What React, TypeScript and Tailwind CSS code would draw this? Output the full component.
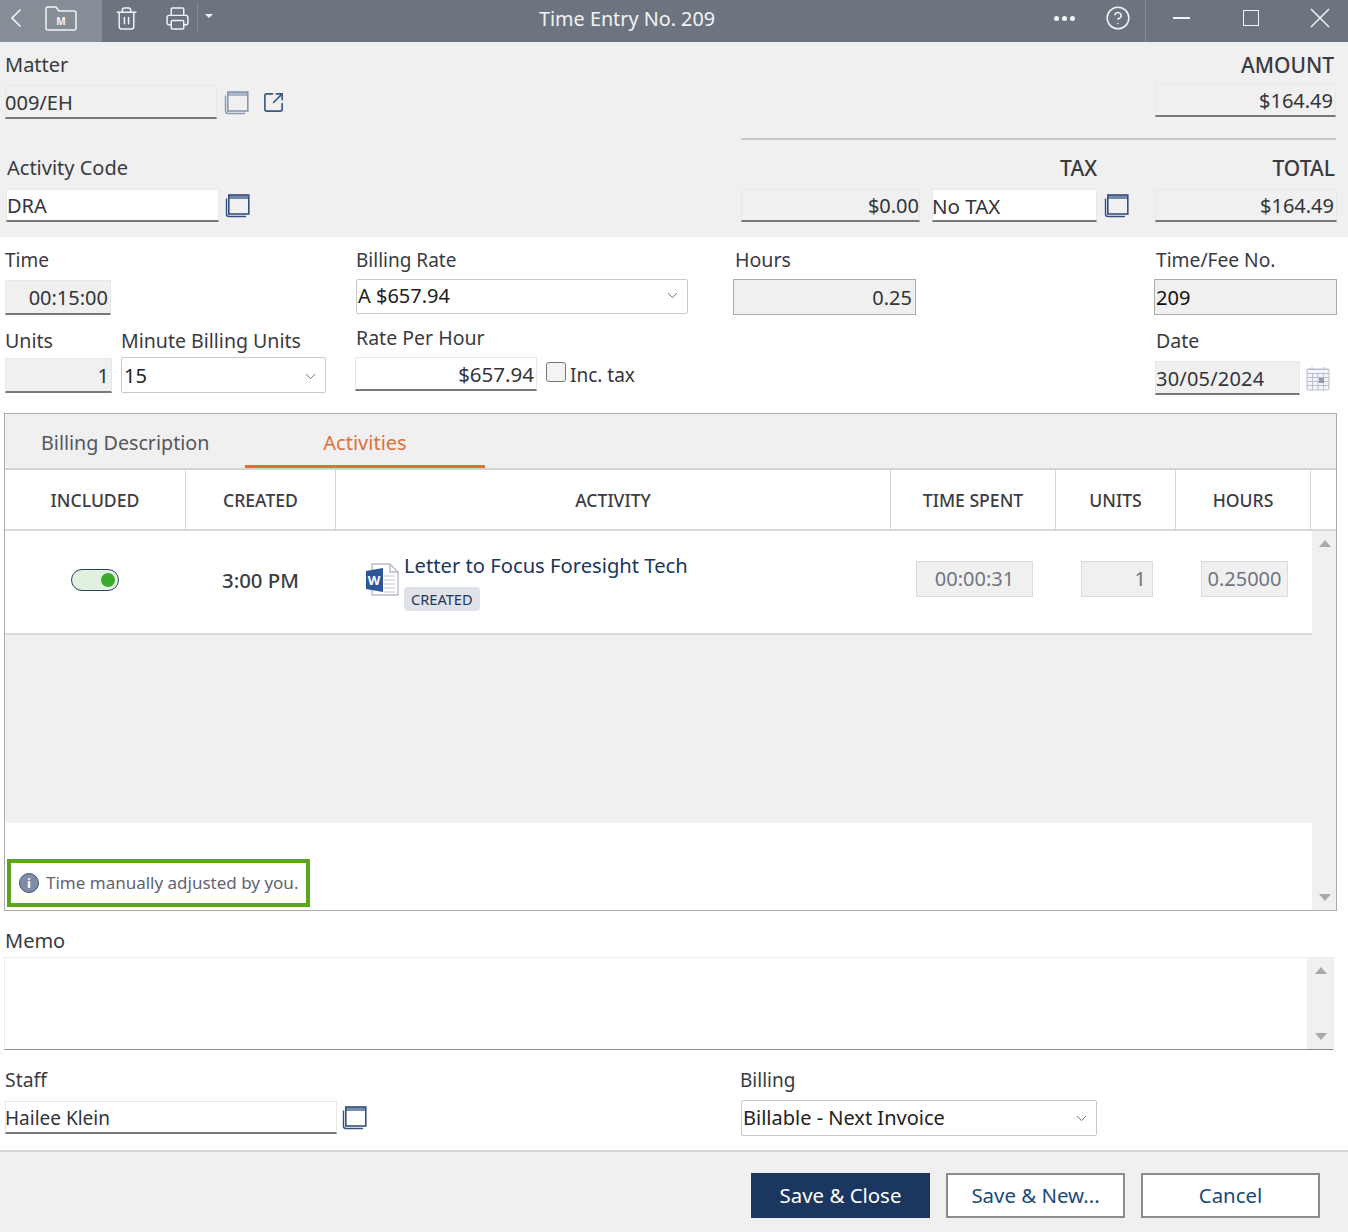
import { ChevronDown, HelpCircle, Trash2, Printer, SquareArrowOutUpRight } from "lucide-react";
import type { ReactNode } from "react";
import { twMerge } from "tailwind-merge";

const font = { fontFamily: '"Noto Sans", sans-serif' };

function StackIcon({ faded = false }: { faded?: boolean }) {
  return (
    <svg width="25" height="25" viewBox="0 0 25 25" fill="none" className={faded ? "shrink-0 opacity-55" : "shrink-0"}>
      <path d="M1.5 5.5V21Q1.5 23.5 4 23.5H21" stroke="#35507f" strokeWidth="1.4" />
      <rect x="3.8" y="2" width="20" height="19" stroke="#35507f" strokeWidth="1.6" />
      <rect x="3.8" y="2" width="20" height="4" fill="#35507f" fillOpacity="0.65" />
    </svg>
  );
}

function BackChevron() {
  return (
    <svg width="12" height="20" viewBox="0 0 12 20" fill="none" stroke="#f2f3f4" strokeWidth="1.6">
      <path d="M10.5 1.5L2 10L10.5 18.5" />
    </svg>
  );
}

function FolderIcon() {
  return (
    <svg width="32" height="26" viewBox="0 0 32 26" fill="none" stroke="#f2f3f4" strokeWidth="1.5">
      <path d="M1 4V23Q1 25 3 25H29Q31 25 31 23V8Q31 6 29 6H14L11 2H3Q1 2 1 4Z" />
      <text x="16" y="20" fontSize="10" fontWeight="700" fill="#f2f3f4" stroke="none" textAnchor="middle" style={font}>M</text>
    </svg>
  );
}

function WindowControls() {
  return (
    <div className="flex h-full flex-1 items-center border-l border-[#858e97] pb-[6px]">
      <div className="ml-[27px] h-[1.5px] w-[17px] bg-[#f2f3f4]" />
      <div className="ml-[53px] h-[16px] w-[16px] border-[1.5px] border-[#f2f3f4]" />
      <svg width="20" height="20" viewBox="0 0 20 20" fill="none" stroke="#f2f3f4" strokeWidth="1.5" className="ml-[51px]">
        <path d="M1 1L19 19M19 1L1 19" />
      </svg>
    </div>
  );
}

function WordIcon() {
  return (
    <svg width="35" height="36" viewBox="0 0 35 36" fill="none">
      <path d="M7 2H25L33 10V33H7Z" fill="#fff" stroke="#b6bcc8" strokeWidth="1.4" />
      <path d="M25 2V10H33" stroke="#b6bcc8" strokeWidth="1.4" />
      <path d="M19 14H30M19 18H30M19 22H30M19 26H30M19 30H30" stroke="#c6cad2" strokeWidth="1.2" />
      <path d="M1 9L18 6V30L1 27Z" fill="#2b579a" />
      <text x="9" y="23" fontSize="13" fontWeight="700" fill="#fff" textAnchor="middle" style={font}>W</text>
    </svg>
  );
}

function CalendarIcon() {
  return (
    <svg width="24" height="25" viewBox="0 0 24 25" fill="none" stroke="#b6bdcc" strokeWidth="1">
      <rect x="1" y="3" width="22" height="21" rx="1" fill="#f4f5f8" />
      <path d="M1 3.5H23M6 1V4M18 1V4M1 7.5H23M1 11.5H23M1 15.5H23M1 19.5H23M6.5 7V24M12 7V24M17.5 7V24" />
      <rect x="13" y="12" width="5" height="5" fill="#9099ae" stroke="none" />
    </svg>
  );
}

function Label({ children, className = "" }: { children: ReactNode; className?: string }) {
  // leading goes last: twMerge drops a leading class that comes before a text size
  return <div className={twMerge("text-[20px] text-[#3a3a42]", className, "leading-[26px]")}>{children}</div>;
}

function Underlined({ children, className = "" }: { children: ReactNode; className?: string }) {
  return (
    <div className={twMerge("flex items-center border border-b-2 border-[#e8e8e8] border-b-[#77777c] pt-[2px] text-[20px] text-[#33343c]", className)}>
      {children}
    </div>
  );
}

function SelectBox({ value, className = "" }: { value: string; className?: string }) {
  return (
    <div className={twMerge("flex items-center justify-between rounded-[2px] border border-[#c9c9c9] bg-white pl-px pr-[6px] text-[20px] text-[#222]", className)}>
      <span>{value}</span>
      <ChevronDown size={17} strokeWidth={1.2} color="#555" />
    </div>
  );
}

function Scrollbar({ className = "" }: { className?: string }) {
  return (
    <div className={twMerge("flex flex-col items-center justify-between bg-[#f0f0f0] py-[9px]", className)}>
      <div className="h-0 w-0 border-x-[6px] border-b-[7px] border-x-transparent border-b-[#a9a9a9]" />
      <div className="h-0 w-0 border-x-[6px] border-t-[7px] border-x-transparent border-t-[#a9a9a9]" />
    </div>
  );
}

function TitleBar() {
  return (
    <div className="flex h-[42px] items-center bg-[#6c757f] text-[#f2f3f4]">
      <div className="flex h-full w-[102px] items-center bg-[#858e97] pl-[10px] pb-[6px]">
        <BackChevron />
        <div className="ml-[23px]"><FolderIcon /></div>
      </div>
      <div className="ml-[12px] flex items-center pb-[6px]">
        <Trash2 size={25} strokeWidth={1.4} />
        <Printer size={25} strokeWidth={1.4} className="ml-[26px]" />
        <div className="ml-[7px] h-[30px] w-px bg-[#858e97]" />
        <div className="ml-[7px] mb-[4px] h-0 w-0 border-x-[4px] border-t-[4px] border-x-transparent border-t-[#f2f3f4]" />
      </div>
      <div className="ml-[326px] w-[176px] whitespace-nowrap pb-[4px] text-center text-[19.8px]">Time Entry No. 209</div>
      <div className="mb-[6px] ml-[339px] flex gap-[3px]">
        <span className="h-[5px] w-[5px] rounded-full bg-[#f2f3f4]" />
        <span className="h-[5px] w-[5px] rounded-full bg-[#f2f3f4]" />
        <span className="h-[5px] w-[5px] rounded-full bg-[#f2f3f4]" />
      </div>
      <HelpCircle size={26} strokeWidth={1.4} className="mb-[6px] ml-[30px]" />
      <div className="ml-[14px] flex h-full flex-1">
        <WindowControls />
      </div>
    </div>
  );
}

function TopSection() {
  return (
    <div className="flex h-[195px] bg-[#f0f0f0]">
      <div className="w-[741px] pl-[5px] pt-[10px]">
        <Label>Matter</Label>
        <div className="mt-[7px] flex items-center">
          <Underlined className="h-[34px] w-[212px] indent-[-1px]">009/EH</Underlined>
          <div className="ml-[7px]"><StackIcon faded /></div>
          <SquareArrowOutUpRight size={23} strokeWidth={1.7} color="#3b5684" className="ml-[13px]" />
        </div>
        <Label className="ml-[2px] mt-[36px]">Activity Code</Label>
        <div className="ml-px mt-[8px] flex items-center">
          <Underlined className="h-[33px] w-[213px] bg-white">DRA</Underlined>
          <div className="ml-[6px]"><StackIcon /></div>
        </div>
      </div>
      <div className="w-[595px] pt-[10px]">
        <Label className="pr-[2px] text-right text-[21px] font-medium">AMOUNT</Label>
        <div className="mt-[6px] flex justify-end">
          <Underlined className="h-[33px] w-[181px] justify-end pr-[2px]">$164.49</Underlined>
        </div>
        <div className="mt-[21px] h-[2px] bg-[#c8c8c8]" />
        <div className="mt-[15px] flex font-medium">
          <Label className="w-[356px] text-right text-[21px] font-medium">TAX</Label>
          <Label className="flex-1 pr-px text-right text-[21px] font-medium">TOTAL</Label>
        </div>
        <div className="mt-[8px] flex items-center">
          <Underlined className="h-[33px] w-[179px] justify-end">$0.00</Underlined>
          <Underlined className="ml-[12px] h-[33px] w-[165px] bg-white text-[20.5px] indent-[-1px]">No TAX</Underlined>
          <div className="ml-[7px]"><StackIcon /></div>
          <Underlined className="ml-[26px] -mr-px h-[33px] flex-1 justify-end pr-[2px]">$164.49</Underlined>
        </div>
      </div>
    </div>
  );
}

function MiddleSection() {
  return (
    <div className="flex h-[176px] bg-white pt-[10px]">
      <div className="ml-[5px] w-[351px]">
        <Label className="text-[19px]">Time</Label>
        <Underlined className="mt-[7px] h-[35px] w-[106px] justify-end bg-[#f0f0f0] pr-[2px]">00:15:00</Underlined>
        <div className="mt-[13px] flex">
          <div className="w-[116px]">
            <Label className="mb-[4px] text-[19.6px]">Units</Label>
            <Underlined className="h-[35px] w-[107px] justify-end bg-[#f0f0f0] pr-[2px]">1</Underlined>
          </div>
          <div>
            <Label className="text-[19.55px]">Minute Billing Units</Label>
            <SelectBox value="15" className="mt-[3px] h-[36px] w-[205px] pl-[2px] pt-[2px]" />
          </div>
        </div>
      </div>
      <div className="w-[377px]">
        <Label className="text-[19px]">Billing Rate</Label>
        <SelectBox value="A $657.94" className="mt-[6px] h-[35px] w-[332px] pb-[2px]" />
        <Label className="mt-[11px] text-[19.55px]">Rate Per Hour</Label>
        <div className="mt-[6px] flex items-center">
          <Underlined className="-ml-px h-[34px] w-[182px] justify-end pr-[2px] text-[20.5px]">$657.94</Underlined>
          <div className="mb-[4px] ml-[9px] h-[20px] w-[20px] rounded-[3px] border border-[#767676] bg-[#f4f4f4]" />
          <span className="ml-[4px] pt-[2px] text-[19px] text-[#33343c]">Inc. tax</span>
        </div>
      </div>
      <div className="w-[421px]">
        <Label className="ml-[2px] text-[19.6px]">Hours</Label>
        <div className="mt-[6px] flex h-[36px] w-[183px] items-center justify-end border border-[#ababab] bg-[#f0f0f0] pr-[3px] pt-[2px] text-[20px] text-[#33343c]">0.25</div>
      </div>
      <div>
        <Label className="ml-[2px] text-[19.2px]">Time/Fee No.</Label>
        <div className="mt-[6px] flex h-[36px] w-[183px] items-center border border-[#ababab] bg-[#f0f0f0] pl-px pt-[2px] text-[20px] text-[#111]">209</div>
        <Label className="ml-[2px] mt-[13px] text-[19.6px]">Date</Label>
        <div className="ml-px mt-[7px] flex items-center">
          <Underlined className="h-[34px] w-[145px] bg-[#f0f0f0] tracking-[0.2px]">30/05/2024</Underlined>
          <div className="ml-[6px] flex"><CalendarIcon /></div>
        </div>
      </div>
    </div>
  );
}

const columns = [
  { title: "INCLUDED", width: "w-[181px]" },
  { title: "CREATED", width: "w-[150px]" },
  { title: "ACTIVITY", width: "w-[555px]" },
  { title: "TIME SPENT", width: "w-[165px]" },
  { title: "UNITS", width: "w-[120px]" },
  { title: "HOURS", width: "w-[135px]" },
];

function ReadOnlyCell({ value, className = "" }: { value: string; className?: string }) {
  return (
    <div className={twMerge("mb-[6px] flex h-[36px] items-center border border-[#dcdcdc] bg-[#f0f0f0] text-[20px] text-[#6f7680]", className)}>
      {value}
    </div>
  );
}

function ActivityPanel() {
  return (
    <div className="mx-[4px] h-[498px] w-[1333px] border border-[#ababab] bg-white">
      <div className="flex h-[56px] border-b-2 border-[#d4d4d4] bg-[#f0f0f0] text-[20px]">
        <div className="w-[240px] whitespace-nowrap pl-[36px] pt-[14px] text-[19.7px] text-[#55575e]">Billing Description</div>
        <div className="-mb-[1px] h-[54px] w-[240px] border-b-[3px] border-[#d9733c] pt-[14px] text-center text-[#d9733c]">Activities</div>
      </div>
      <div className="flex h-[61px] border-b-2 border-[#d9d9d9]">
        {columns.map((col) => (
          <div key={col.title} className={`flex items-center justify-center border-r border-[#d4d4d4] pt-px text-[17.6px] font-medium text-[#3c3c44] ${col.width}`}>
            {col.title}
          </div>
        ))}
      </div>
      <div className="flex h-[379px]">
        <div className="flex w-[1307px] flex-col">
          <div className="flex h-[104px] items-center border-b-2 border-[#d9d9d9]">
            <div className="flex w-[180px] justify-center pb-[4px]">
              <div className="flex h-[22px] w-[48px] items-center justify-end rounded-full border border-[#26426b] bg-[#e2f1df] pr-[3px]">
                <div className="h-[14px] w-[14px] rounded-full bg-[#3aaa2a]" />
              </div>
            </div>
            <div className="w-[151px] pb-[4px] text-center text-[20.4px] font-medium text-[#3c3c44]">3:00 PM</div>
            <div className="flex w-[555px] items-center pb-[2px] pl-[29px]">
              <div className="mb-[3px] flex"><WordIcon /></div>
              <div className="ml-[4px]">
                <div className="text-[20.2px] leading-[28px] text-[#1b365f]">Letter to Focus Foresight Tech</div>
                <div className="mt-[8px] inline-block rounded-[4px] bg-[#dfe2e8] px-[7px] text-[14.6px] leading-[24px] text-[#24365a]">CREATED</div>
              </div>
            </div>
            <div className="flex w-[165px] justify-center pl-[2px]">
              <ReadOnlyCell value="00:00:31" className="w-[117px] justify-center" />
            </div>
            <div className="flex w-[120px] justify-center pl-[2px]">
              <ReadOnlyCell value="1" className="w-[72px] justify-end pr-[6px]" />
            </div>
            <div className="flex flex-1 justify-center pl-[1px]">
              <ReadOnlyCell value="0.25000" className="w-[87px] justify-center" />
            </div>
          </div>
          <div className="h-[188px] bg-[#f0f0f0]" />
          <div className="flex flex-1 items-end pb-[3px] pl-[2px]">
            <div className="flex h-[48px] w-[303px] items-center border-[4px] border-[#5ca51c] bg-white pl-[8px] text-[17px] text-[#5f6470]">
              <div className="flex h-[20px] w-[20px] items-center justify-center rounded-full border border-[#43557a] bg-[#7f8ca6]">
                <span className="text-[13px] font-bold leading-none text-white">i</span>
              </div>
              <span className="ml-[7px] whitespace-nowrap">Time manually adjusted by you.</span>
            </div>
          </div>
        </div>
        <Scrollbar className="flex-1 pl-[2px]" />
      </div>
    </div>
  );
}

function BottomSection() {
  return (
    <div className="bg-white">
      <Label className="ml-[5px] mt-[17px]">Memo</Label>
      <div className="ml-[4px] mt-[3px] flex h-[93px] w-[1330px] border border-[#ececec] border-b-[#8a8a8a]">
        <div className="flex-1" />
        <Scrollbar className="w-[26px] pl-[2px]" />
      </div>
      <div className="mt-[17px] flex h-[83px]">
        <div className="ml-[5px] w-[735px]">
          <Label className="text-[19.4px]">Staff</Label>
          <div className="mt-[8px] flex items-center">
            <Underlined className="h-[33px] w-[332px] text-[19px] indent-[-1px]">Hailee Klein</Underlined>
            <div className="ml-[5px]"><StackIcon /></div>
          </div>
        </div>
        <div>
          <Label className="text-[19px]">Billing</Label>
          <SelectBox value="Billable - Next Invoice" className="ml-px mt-[7px] h-[36px] w-[356px]" />
        </div>
      </div>
    </div>
  );
}

function Footer() {
  return (
    <div className="flex h-[82px] items-start justify-end gap-[16px] border-t-2 border-[#d4d4d4] bg-[#f0f0f0] pr-[28px] pt-[21px] text-[20.4px]">
      <button className="h-[45px] w-[179px] bg-[#1b365f] text-white">Save &amp; Close</button>
      <button className="h-[45px] w-[179px] border-2 border-[#8a8c92] bg-white text-[#1c4a78]">Save &amp; New...</button>
      <button className="h-[45px] w-[179px] border-2 border-[#8a8c92] bg-white text-[#1c4a78]">Cancel</button>
    </div>
  );
}

export default function App() {
  return (
    <div className="h-[1232px] w-[1348px] overflow-hidden bg-white" style={font}>
      <TitleBar />
      <TopSection />
      <MiddleSection />
      <ActivityPanel />
      <BottomSection />
      <Footer />
    </div>
  );
}
